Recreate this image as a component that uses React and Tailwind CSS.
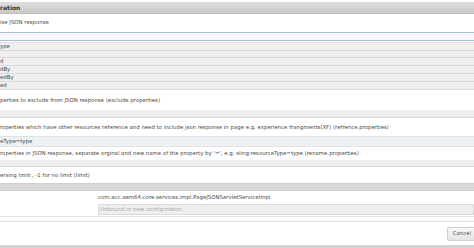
import React from "react";

function GrayRow({ text, h = "h-[8px]" }) {
  return (
    <div className={`${h} flex items-center bg-[#efefef] border-b border-[#d9d9d9] whitespace-nowrap`}>
      {text}
    </div>
  );
}

function TextRow({ text, h }) {
  return (
    <div className={`${h} flex items-center bg-white whitespace-nowrap`}>{text}</div>
  );
}

export default function App() {
  return (
    <div className="w-[474px] h-[248px] overflow-hidden bg-white font-['DejaVu_Sans',sans-serif] text-[5.4px] text-[#4a4a4a] flex flex-col">
      <div className="h-[2px] bg-white" />
      {/* Dialog header */}
      <div className="h-[12px] flex items-center bg-gradient-to-b from-[#dedede] to-[#c8c8c8] border-b border-[#bcbcbc] font-bold text-[6px] text-[#333]">
        ration
      </div>
      <TextRow text="ise JSON response" h="h-[16px]" />
      <div className="h-[2px]" />
      {/* focused input */}
      <div className="h-[9px] border-y border-[#a6bfe3] bg-[#f6f8fb]" />
      <div className="h-[2px] border-b border-[#ecd9e1]" />
      <GrayRow text="ype" h="h-[8px]" />
      <GrayRow h="h-[7px]" />
      <GrayRow text="d" h="h-[8px]" />
      <GrayRow text="dBy" h="h-[8px]" />
      <GrayRow text="edBy" h="h-[8px]" />
      <GrayRow text="ed" h="h-[8px]" />
      <TextRow text="perties to exclude from JSON response (exclude.properties)" h="h-[20px]" />
      <GrayRow h="h-[8px]" />
      <TextRow
        text="roperties which have other resources reference and need to include json response in page e.g. experience frangments(XF) (refrence.properties)"
        h="h-[18px]"
      />
      <div className="h-[11px] flex items-center bg-[#eef1f4] border-y border-[#dde2e8] text-[#3d4b5c] whitespace-nowrap">
        eType=type
      </div>
      <TextRow
        text="roperties in JSON response, separate orginal and new name of the property by '=', e.g. sling:resourceType=type (rename.properties)"
        h="h-[13px]"
      />
      <GrayRow h="h-[7px]" />
      <TextRow text="ersing limit , -1 for no limit (limit)" h="h-[16px]" />
      {/* section bar */}
      <div className="h-[8px] bg-[#d9d9d9] border-y border-[#cfcfcf]" />
      <div className="h-[13px] flex items-center pl-[98px] whitespace-nowrap">
        com.acc.aem64.core.services.impl.PageJSONServletServiceImpl
      </div>
      <div className="h-[11px] flex">
        <div className="w-[98px]" />
        <div className="flex-1 flex items-center pl-[1px] bg-[#eeeeee] border border-[#dadada] text-[#a8a8a8] whitespace-nowrap">
          Unbound or new configuration
        </div>
      </div>
      <div className="h-[2px] border-b border-[#e2e2e2]" />
      <div className="h-[5px] border-b border-[#dcdcdc]" />
      {/* footer */}
      <div className="h-[23px] flex items-center justify-end">
        <button className="h-[14px] px-[5px] mr-[-3px] bg-gradient-to-b from-[#f7f7f7] to-[#e4e4e4] border border-[#cfcfcf] rounded-[2px] text-[5.4px] text-[#555]">
          Cancel
        </button>
      </div>
      <div className="flex-1 bg-[#d4d4d4]" />
    </div>
  );
}
